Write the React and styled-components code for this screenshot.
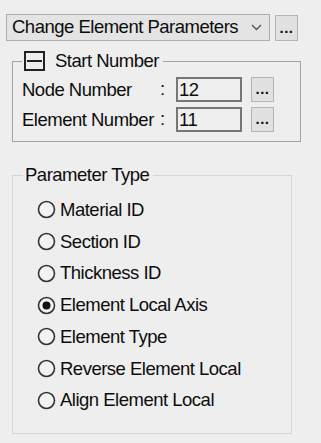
import React from "react";
import styled, { createGlobalStyle } from "styled-components";

const GlobalStyle = createGlobalStyle`
  html, body {
    margin: 0;
    padding: 0;
    background: #eeeeee;
  }
  body {
    font-family: "Liberation Sans", Arial, sans-serif;
    font-size: 18.5px;
    letter-spacing: -0.5px;
    color: #0d0d0d;
  }
`;

const Panel = styled.div`
  width: 321px;
  height: 443px;
  box-sizing: border-box;
  padding: 14px 0 0 6px;
  display: flex;
  flex-direction: column;
`;

const TopRow = styled.div`
  display: flex;
  align-items: flex-start;
  gap: 5px;
`;

const Combo = styled.div`
  width: 264px;
  height: 27px;
  box-sizing: border-box;
  border: 1px solid #adadad;
  background: #e4e4e4;
  display: flex;
  align-items: center;
  justify-content: space-between;
  padding: 0 7px 0 5px;
  line-height: 1;
`;

const DotsButton = styled.div`
  width: 23px;
  height: ${(p) => (p.small ? 25 : 26)}px;
  margin-top: ${(p) => (p.small ? 0 : 1)}px;
  box-sizing: border-box;
  border: 1px solid #b4b4b4;
  background: #e1e1e1;
  display: flex;
  align-items: flex-end;
  justify-content: center;
  font-size: 15px;
  font-weight: bold;
  line-height: 1;
  padding-bottom: 5px;
  letter-spacing: 0.5px;
`;

const Group = styled.fieldset`
  margin: ${(p) => p.top}px 0 0 6px;
  width: ${(p) => p.width}px;
  box-sizing: border-box;
  border: 1px solid ${(p) => p.line};
  padding: ${(p) => p.pad};
  min-width: 0;
`;

const Legend = styled.legend`
  display: flex;
  align-items: center;
  gap: 10px;
  height: 20px;
  line-height: 20px;
  padding: 0 4px 0 2px;
`;

const Collapse = styled.span`
  width: 21px;
  height: 20px;
  box-sizing: border-box;
  border: 2px solid #222;
  display: flex;
  align-items: center;
  justify-content: center;
  &::after {
    content: "";
    width: 15px;
    height: 2px;
    background: #222;
  }
`;

const FieldGrid = styled.div`
  display: grid;
  grid-template-columns: 138px 16px 75px 23px;
  grid-auto-rows: 25px;
  row-gap: 5px;
  align-items: center;
`;

const Label = styled.span`
  white-space: nowrap;
`;

const Colon = styled.span`
  line-height: 1;
`;

const NumberBox = styled.div`
  width: 66px;
  height: 25px;
  box-sizing: border-box;
  border: 2px solid #767676;
  background: #efefef;
  padding-left: 1px;
  display: flex;
  align-items: center;
`;

const RadioList = styled.div`
  display: flex;
  flex-direction: column;
  margin-left: 14px;
`;

const RadioRow = styled.div`
  height: 31.75px;
  display: flex;
  align-items: center;
  gap: 4px;
  white-space: nowrap;
`;

const Radio = ({ checked }) => (
  <svg width="19" height="19" viewBox="0 0 19 19">
    <circle cx="9.5" cy="9.5" r="8" fill="#f2f2f2" stroke="#333" strokeWidth="1.6" />
    {checked && <circle cx="9.5" cy="9.5" r="4" fill="#111" />}
  </svg>
);

const Chevron = () => (
  <svg width="11" height="7" viewBox="0 0 11 7">
    <path d="M1 1 L5.5 5.5 L10 1" fill="none" stroke="#555" strokeWidth="1.4" />
  </svg>
);

const options = [
  "Material ID",
  "Section ID",
  "Thickness ID",
  "Element Local Axis",
  "Element Type",
  "Reverse Element Local",
  "Align Element Local",
];

export default function App() {
  return (
    <Panel>
      <GlobalStyle />
      <TopRow>
        <Combo>
          <span>Change Element Parameters</span>
          <Chevron />
        </Combo>
        <DotsButton>...</DotsButton>
      </TopRow>

      <Group top={10} width={289} line="#a3a3a3" pad="6px 0 9px 9px">
        <Legend>
          <Collapse />
          <span>Start Number</span>
        </Legend>
        <FieldGrid>
          <Label>Node Number</Label>
          <Colon>:</Colon>
          <NumberBox>12</NumberBox>
          <DotsButton small>...</DotsButton>
          <Label>Element Number</Label>
          <Colon>:</Colon>
          <NumberBox>11</NumberBox>
          <DotsButton small>...</DotsButton>
        </FieldGrid>
      </Group>

      <Group top={23} width={280} line="#d6d6d6" pad="9px 0 17px 10px">
        <Legend>Parameter Type</Legend>
        <RadioList>
          {options.map((o) => (
            <RadioRow key={o}>
              <Radio checked={o === "Element Local Axis"} />
              {o}
            </RadioRow>
          ))}
        </RadioList>
      </Group>
    </Panel>
  );
}
